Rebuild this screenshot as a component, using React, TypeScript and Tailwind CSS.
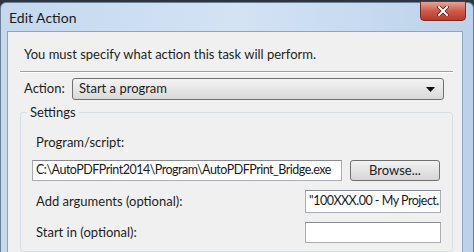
import React from 'react';

const font = { fontFamily: 'Lato, "Open Sans", "Liberation Sans", sans-serif' };

const TextBox: React.FC<{ value?: string; className?: string }> = ({ value, className }) => (
  <div
    className={`h-full bg-white border border-[#abadb3] border-t-[#8a8d94] flex items-center px-[3px] text-[12.5px] tracking-[-0.5px] text-[#1a1a1a] whitespace-nowrap overflow-hidden ${className ?? ''}`}
  >
    {value}
  </div>
);

export default function App() {
  return (
    <div className="w-[474px] h-[252px] overflow-hidden bg-[#2e3440] text-[#1e1e1e]" style={font}>
      <div className="h-full mt-[2px] rounded-t-[6px] bg-gradient-to-r from-[#c4d8ee] via-[#d3e3f4] to-[#bcd2ea] border border-[#6d7f97] flex flex-col">
        {/* Title bar */}
        <div className="relative h-[28px] shrink-0 flex items-center pl-[8px]">
          <span className="text-[14px] text-[#1b1b1b]">Edit Action</span>
          <div className="absolute right-[7px] top-[-2px] w-[46px] h-[20px] rounded-b-[4px] border border-[#7a2a22] bg-gradient-to-b from-[#e6a296] via-[#cf5a48] to-[#b8382a] flex items-center justify-center">
            <svg width="12" height="10" viewBox="0 0 12 10">
              <path d="M2 1 L10 9 M10 1 L2 9" stroke="#5a1a12" strokeWidth="3.4" strokeLinecap="square" />
              <path d="M2 1 L10 9 M10 1 L2 9" stroke="#ffffff" strokeWidth="2" strokeLinecap="square" />
            </svg>
          </div>
        </div>

        {/* Client area */}
        <div className="flex-1 ml-[6px] mr-[10px] border border-[#8ea3bd] bg-[#f0f0f0] pl-[12px] pr-[9px] pt-[13px] text-[13px]">
          <div className="pl-[4px] leading-[18px]">You must specify what action this task will perform.</div>
          <div className="mt-[8px] border-t border-[#a0a0a0] border-b border-b-white" />

          <div className="flex items-center mt-[5px] h-[22px]">
            <span className="pl-[4px] w-[52px]">Action:</span>
            <div className="w-[372px] h-full rounded-[3px] border border-[#707070] bg-gradient-to-b from-[#f3f3f3] to-[#d9d9d9] flex items-center justify-between pl-[6px] pr-[8px]">
              <span>Start a program</span>
              <svg width="9" height="5" viewBox="0 0 9 5">
                <path d="M0 0 H9 L4.5 5 Z" fill="#111" />
              </svg>
            </div>
          </div>

          <div className="relative mt-[12px] border border-[#d5dfe5] rounded-[3px] h-[140px] px-[11px] pt-[20px]">
            <span className="absolute -top-[10px] left-[6px] px-[3px] bg-[#f0f0f0] leading-[18px]">Settings</span>
            <div className="pl-[4px] leading-[18px]">Program/script:</div>
            <div className="flex mt-[9px] h-[21px] gap-[8px]">
              <TextBox className="w-[310px]" value={'C:\\AutoPDFPrint2014\\Program\\AutoPDFPrint_Bridge.exe'} />
              <div className="w-[90px] h-[21px] rounded-[3px] border border-[#707070] bg-gradient-to-b from-[#f2f2f2] to-[#d6d6d6] flex items-center justify-center">
                Browse...
              </div>
            </div>
            <div className="flex items-center justify-between mt-[9px] h-[23px]">
              <span className="pl-[4px]">Add arguments (optional):</span>
              <TextBox className="w-[136px]" value={'"100XXX.00 - My Project.'} />
            </div>
            <div className="flex items-center justify-between mt-[9px] h-[21px]">
              <span className="pl-[4px]">Start in (optional):</span>
              <TextBox className="w-[136px]" />
            </div>
          </div>
        </div>
      </div>
    </div>
  );
}
